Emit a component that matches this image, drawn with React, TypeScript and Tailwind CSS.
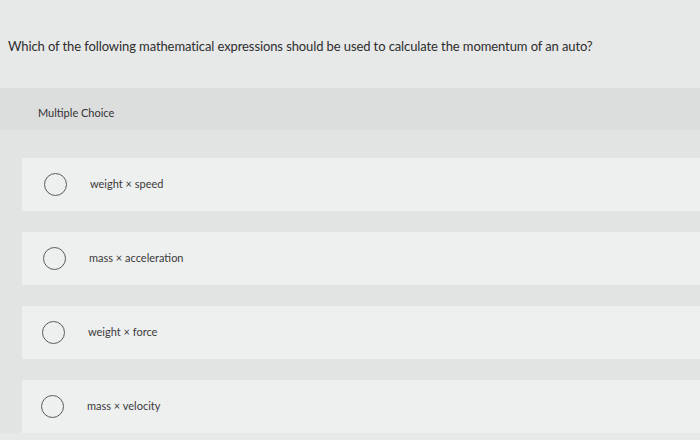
const OPTIONS = [
  { label: "weight × speed", pad: "pl-[22px]" },
  { label: "mass × acceleration", pad: "pl-[21px]" },
  { label: "weight × force", pad: "pl-[20px]" },
  { label: "mass × velocity", pad: "pl-[19px]" },
];

function Radio() {
  return <span className="block h-[23px] w-[23px] shrink-0 rounded-full border-[1.5px] border-[#5a5a5a]" />;
}

export default function App() {
  return (
    <div className="h-[440px] w-[700px] overflow-hidden bg-[#e7e8e8] font-['Lato',sans-serif] text-[#333]">
      <div className="flex h-[88px] items-center pl-[8px] pt-[6px]">
        <p className="text-[13px] tracking-[-0.1px] text-[#2e2e2e]">
          Which of the following mathematical expressions should be used to calculate the momentum of an auto?
        </p>
      </div>

      <div className="flex h-[42px] items-center bg-[#dcdddd] pl-[38px] pt-[8px]">
        <span className="text-[11px] text-[#333]">Multiple Choice</span>
      </div>

      <div className="flex flex-col gap-[21px] bg-[#e2e3e3] pl-[22px] pt-[28px]">
        {OPTIONS.map((o) => (
          <div key={o.label} className={`flex h-[53px] items-center gap-[23px] bg-[#eeefef] ${o.pad}`}>
            <Radio />
            <span className="text-[11px] text-[#3a3a3a]">{o.label}</span>
          </div>
        ))}
      </div>
    </div>
  );
}
